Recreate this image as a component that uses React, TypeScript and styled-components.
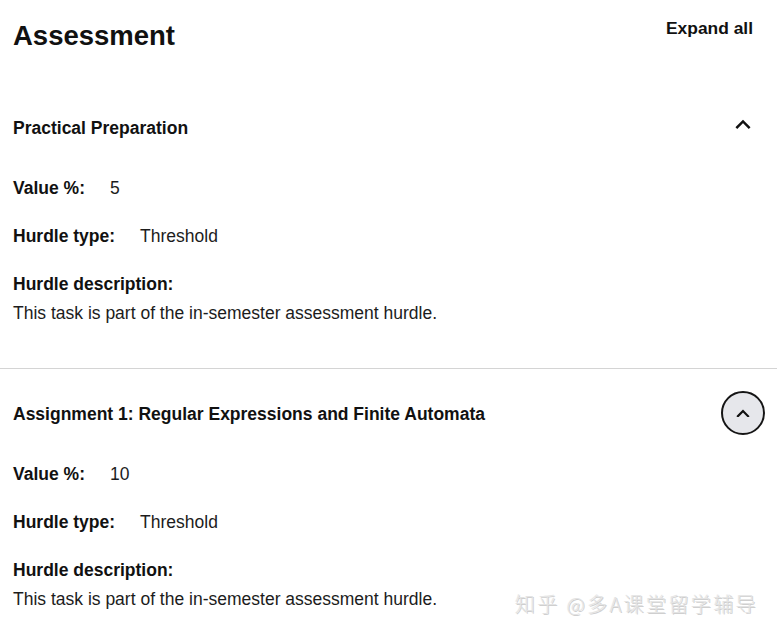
import React from 'react'
import styled, { createGlobalStyle } from 'styled-components'

const GlobalStyle = createGlobalStyle`
  html, body {
    margin: 0;
    padding: 0;
    background: #fff;
  }
  body {
    font-family: 'Liberation Sans', Arial, sans-serif;
    color: #111;
  }
`

const Page = styled.div`
  position: relative;
  width: 777px;
  height: 637px;
  overflow: hidden;
  background: #fff;
`

const Header = styled.header`
  display: flex;
  justify-content: space-between;
  align-items: flex-start;
  padding: 18px 24px 0 13px;
  height: 83px;
  box-sizing: border-box;
`

const Title = styled.h2`
  margin: 0;
  font-size: 27.5px;
  line-height: 36px;
  font-weight: 700;
`

const ExpandAll = styled.button`
  border: 0;
  background: none;
  padding: 0;
  margin-top: 0;
  font: 700 17.4px/20px 'Liberation Sans', Arial, sans-serif;
  color: #111;
  cursor: pointer;
`

const Section = styled.section<{ $divided?: boolean }>`
  border-top: ${(p) => (p.$divided ? '1px solid #d4d4d4' : '0')};
  padding: ${(p) => (p.$divided ? '24px' : '24px')} 12px 0 13px;
  height: ${(p) => (p.$divided ? '269px' : '285px')};
  box-sizing: border-box;
`

const SectionHead = styled.div`
  display: flex;
  align-items: center;
  justify-content: space-between;
  height: 42px;
`

const SectionTitle = styled.h3`
  margin: 0;
  font-size: 17.5px;
  font-weight: 700;
`

const Toggle = styled.button<{ $focused?: boolean }>`
  width: 44px;
  height: 44px;
  border-radius: 50%;
  display: flex;
  align-items: center;
  justify-content: center;
  padding: 0;
  margin-top: ${(p) => (p.$focused ? '-2px' : '-8px')};
  cursor: pointer;
  box-sizing: border-box;
  border: ${(p) => (p.$focused ? '2px solid #151515' : '2px solid transparent')};
  background: ${(p) => (p.$focused ? '#e6e7eb' : 'transparent')};
  color: #111;
`

const Rows = styled.dl`
  margin: 29px 0 0;
  display: flex;
  flex-direction: column;
  gap: 27px;
`

const Row = styled.div`
  display: flex;
  align-items: baseline;
  gap: 25px;
  font-size: 17.5px;
  line-height: 21px;
`

const Stack = styled.div`
  display: flex;
  flex-direction: column;
  gap: 8px;
  font-size: 17.5px;
  line-height: 21px;
`

const Label = styled.dt`
  font-weight: 700;
`

const Value = styled.dd`
  margin: 0;
  color: #1c1c1c;
`

const Watermark = styled.div`
  position: absolute;
  right: 19px;
  bottom: 19px;
  font-family: 'Noto Sans CJK SC', 'Liberation Sans', sans-serif;
  font-size: 20px;
  font-weight: 300;
  letter-spacing: 2.4px;
  color: #e4e4e4;
  text-shadow: 1px 1px 0 #cfcfcf, -0.5px -0.5px 0 #f8f8f8;
`

const Chevron = ({ size }: { size: number }) => (
  <svg width={size} height={size * 0.6} viewBox="0 0 16 10" fill="none">
    <path d="M2 8.5 L8 2.5 L14 8.5" stroke="currentColor" strokeWidth="2.6" strokeLinecap="square" />
  </svg>
)

type Item = {
  title: string
  value: string
  hurdle: string
  description: string
  focused?: boolean
}

const items: Item[] = [
  {
    title: 'Practical Preparation',
    value: '5',
    hurdle: 'Threshold',
    description: 'This task is part of the in-semester assessment hurdle.',
  },
  {
    title: 'Assignment 1: Regular Expressions and Finite Automata',
    value: '10',
    hurdle: 'Threshold',
    description: 'This task is part of the in-semester assessment hurdle.',
    focused: true,
  },
]

export default function App() {
  return (
    <Page>
      <GlobalStyle />
      <Header>
        <Title>Assessment</Title>
        <ExpandAll>Expand all</ExpandAll>
      </Header>
      {items.map((item, i) => (
        <Section key={item.title} $divided={i > 0}>
          <SectionHead>
            <SectionTitle>{item.title}</SectionTitle>
            <Toggle $focused={item.focused} aria-label="Collapse">
              <Chevron size={item.focused ? 14 : 16} />
            </Toggle>
          </SectionHead>
          <Rows>
            <Row>
              <Label>Value %:</Label>
              <Value>{item.value}</Value>
            </Row>
            <Row>
              <Label>Hurdle type:</Label>
              <Value>{item.hurdle}</Value>
            </Row>
            <Stack>
              <Label>Hurdle description:</Label>
              <Value>{item.description}</Value>
            </Stack>
          </Rows>
        </Section>
      ))}
      <Watermark>知乎 @多A课堂留学辅导</Watermark>
    </Page>
  )
}
